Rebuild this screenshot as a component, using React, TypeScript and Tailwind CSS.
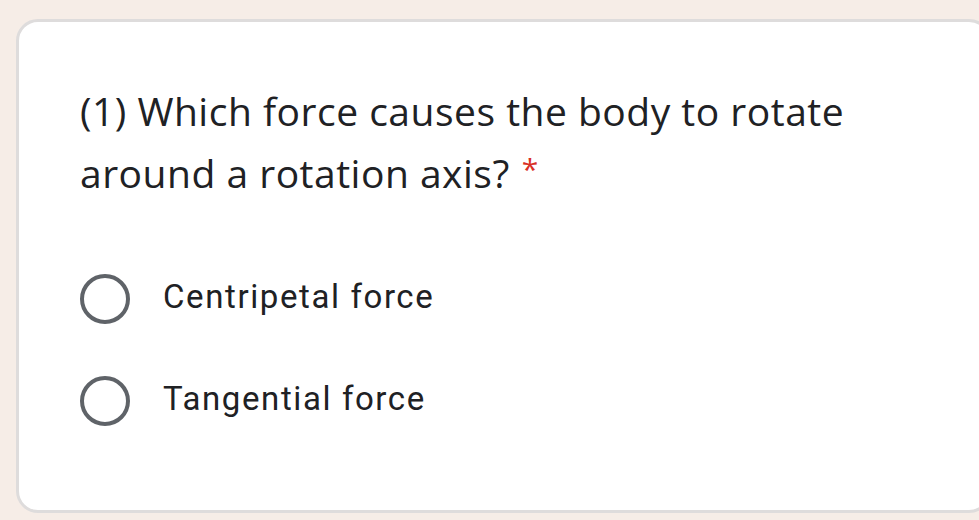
import React from 'react';

const options = ['Centripetal force', 'Tangential force'];

export default function App() {
  return (
    <div className="w-[979px] h-[520px] overflow-hidden bg-[#f6ede7] pt-[19px] pl-[16px]">
      <div className="w-[975px] h-[494px] bg-white border-[3px] border-[#dedcdc] rounded-[22px] pl-[61px] pt-[58px]">
        <div
          className="text-[39px] leading-[62px] text-[#202124] tracking-[0.5px]"
          style={{ fontFamily: '"Open Sans", Roboto, sans-serif' }}
        >
          (1) Which force causes the body to rotate
          <br />
          around a rotation axis?<span className="text-[#d93025] ml-[12px] text-[30px] relative -top-[8px]">*</span>
        </div>
        <div className="mt-[66px] flex flex-col gap-[52px]">
          {options.map((o) => (
            <div key={o} className="flex items-center h-[50px]">
              <div className="w-[50px] h-[50px] rounded-full border-[4.5px] border-[#5f6368] shrink-0" />
              <span
                className="ml-[33px] text-[33px] text-[#202124] tracking-[1.6px] relative -top-[2px]"
                style={{ fontFamily: 'Roboto, sans-serif' }}
              >
                {o}
              </span>
            </div>
          ))}
        </div>
      </div>
    </div>
  );
}
